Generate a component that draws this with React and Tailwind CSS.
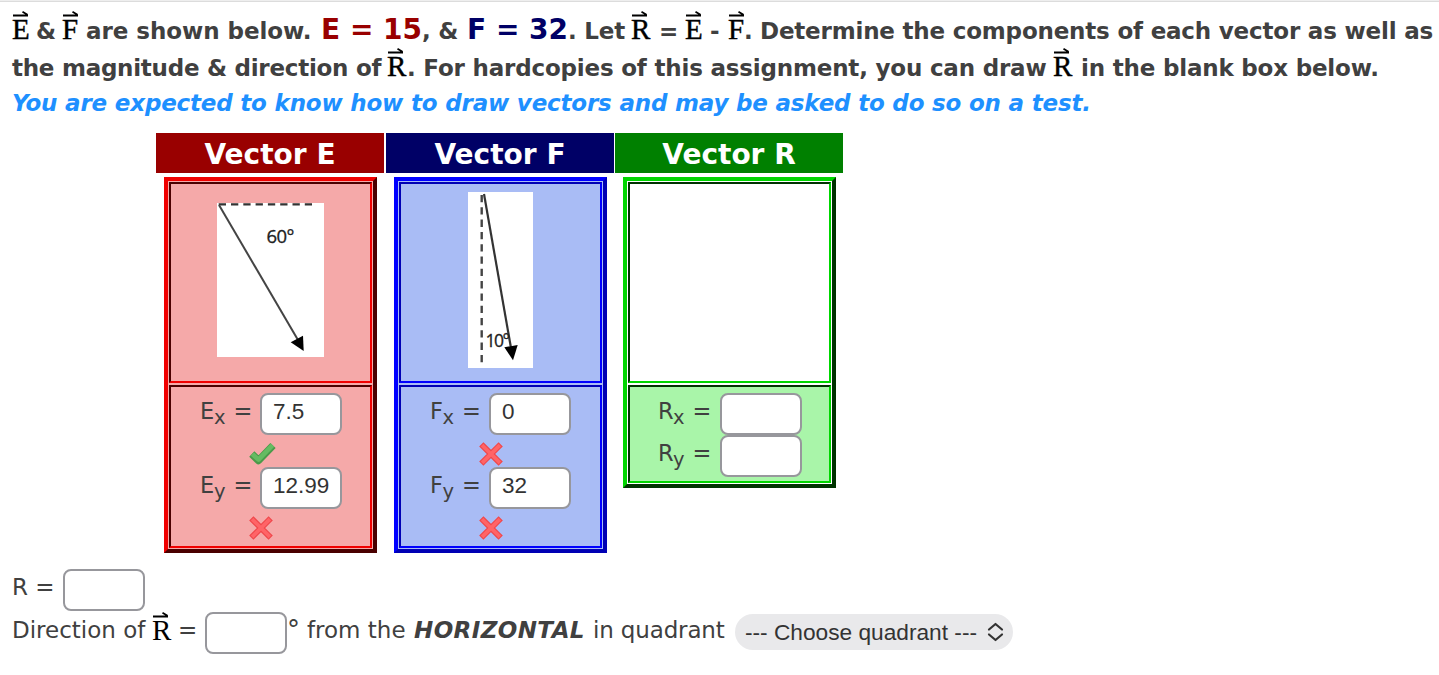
import React from "react";

const verdana = "font-[Verdana,'DejaVu_Sans',sans-serif]";
const arial = "font-['Liberation_Sans',Arial,sans-serif]";

// Letter with a harpoon arrow above it
function Vec({ letter, className = "" }) {
	return (
		<span className={`relative block shrink-0 font-['Liberation_Serif',serif] text-[29px] font-normal leading-9 tracking-normal text-black [-webkit-text-stroke:0.4px_#000] ${className}`}>
			{letter}
			<svg className="absolute left-0 top-0" width="20" height="6" viewBox="0 0 20 6" fill="none" stroke="#000" strokeWidth="1.8">
				<path d="M1 4.5H16M10.5 0.8L15.5 3.8" />
			</svg>
		</span>
	);
}

function Seg({ className = "", children }) {
	return <span className={`block shrink-0 whitespace-pre leading-9 ${className}`}>{children}</span>;
}

function Answer({ value = "", label }) {
	return (
		<input
			type="text"
			aria-label={label}
			defaultValue={value}
			className={`block h-[42px] w-[82px] shrink-0 rounded-lg border-2 border-[#97979c] bg-white pb-[5px] pl-[11px] text-[22.5px] text-[#333] outline-none ${arial}`}
		/>
	);
}

function Check() {
	return (
		<svg width="28" height="24" viewBox="0 0 28 24" fill="none" strokeLinejoin="round">
			<path d="M2.8 12L9.5 18.5L24 3.5" stroke="#4a9a4a" strokeWidth="7.4" />
			<path d="M3.3 12L9.5 17.6L23.6 3.2" stroke="#66bb62" strokeWidth="4.6" />
		</svg>
	);
}

function Cross() {
	return (
		<svg width="24" height="24" viewBox="0 0 24 24" fill="none" strokeLinecap="square">
			<path d="M4.4 4.4L19.6 19.6M19.6 4.4L4.4 19.6" stroke="#f0484c" strokeWidth="6" strokeLinejoin="round" />
			<path d="M4.4 4.4L19.6 19.6M19.6 4.4L4.4 19.6" stroke="#ff6467" strokeWidth="3.6" />
		</svg>
	);
}

function Row({ letter, sub, value, mark, letterWidth = "w-[14px]", labelWidth = "w-[60px]" }) {
	return (
		<>
			<div className="flex h-[42px]">
				<div className={`flex shrink-0 whitespace-nowrap text-[22.5px] leading-9 ${labelWidth}`}>
					<span className={letterWidth}>{letter}</span>
					<span className="w-[19.5px] pt-[7px] text-[19.5px]">{sub}</span>
					<span>=</span>
				</div>
				<Answer value={value} label={`${letter}${sub}`} />
			</div>
			{mark && (
				<div className="flex h-[32px] items-center pl-[49px] pt-[6px]">
					{mark === "right" ? <Check /> : <Cross />}
				</div>
			)}
		</>
	);
}

function Column({ title, head, outer, inner, top = "", bottom = "", children, drawing, pad, className = "" }) {
	return (
		<div className={`w-[228px] ${className}`}>
			<h2 className={`h-10 text-center text-[28px] font-bold leading-[43px] text-white ${head}`}>{title}</h2>
			<div className={`ml-2 mt-1 flex w-[213px] flex-col gap-[2px] border-4 p-px ${outer}`}>
				<div className={`flex h-[201px] justify-center border-2 ${inner} ${top}`}>{drawing}</div>
				<div className={`border-2 pt-[6px] ${inner} ${bottom} ${pad}`}>{children}</div>
			</div>
		</div>
	);
}

function DrawingE() {
	return (
		<svg className="mt-[19px]" width="107" height="154" viewBox="217 203 107 154">
			<rect x="217" y="203" width="107" height="154" fill="#fff" />
			<path d="M218.7 204.3H312" stroke="#333" strokeWidth="2.2" strokeDasharray="7.3 5" />
			<path d="M219 205L298 340" stroke="#444" strokeWidth="2" />
			<path d="M290.7 342.3L303 335.7L303.7 351Z" fill="#000" />
			<text x="266.5" y="242.8" fontFamily="Open Sans" fontSize="18.5" textLength="28" fill="#222" stroke="#222" strokeWidth="0.3">60°</text>
		</svg>
	);
}

function DrawingF() {
	return (
		<svg className="mr-[1px] mt-[8px]" width="65" height="176" viewBox="467 192 65 176">
			<rect x="467" y="192" width="65" height="176" fill="#fff" />
			<path d="M480.7 195V363" stroke="#444" strokeWidth="2.4" strokeDasharray="7.3 5" />
			<path d="M483 194L510 348" stroke="#333" strokeWidth="2.2" />
			<path d="M503.3 347.3L516.7 345L512 360.3Z" fill="#000" />
			<text x="484.5" y="346.8" fontFamily="Open Sans" fontSize="17.5" textLength="24.5" fill="#222" stroke="#222" strokeWidth="0.3">10°</text>
		</svg>
	);
}

function App() {
	return (
		<div className={`h-[675px] w-[1439px] overflow-hidden bg-white text-[23px] text-[#404040] ${verdana}`}>
			<div className="h-[2px] border-b border-[#dcdcdc] bg-[#eee]" />

			{/* Question text */}
			<div className="pl-3 pt-[9px] font-bold tracking-[-0.19px]">
				<div className="flex h-[37px] items-baseline">
					<Vec letter="E" className="w-[24px]" />
					<Seg className="w-[26px]">&amp;</Seg>
					<Vec letter="F" className="w-[24px]" />
					<Seg className="w-[235px] tracking-[-0.05px]">are shown below.</Seg>
					<Seg className="w-[101px] text-[28px] tracking-normal text-[#990000]">E = 15</Seg>
					<Seg className="w-[45px]">, &amp;</Seg>
					<Seg className="w-[101px] text-[28px] tracking-normal text-[#000066]">F = 32</Seg>
					<Seg className="w-[63px]">. Let</Seg>
					<Vec letter="R" className="w-[28px]" />
					<Seg className="w-[26px]">=</Seg>
					<Vec letter="E" className="w-[25px]" />
					<Seg className="w-[18px]">-</Seg>
					<Vec letter="F" className="w-[16px]" />
					<Seg className="w-[16px]">.</Seg>
					<Seg>Determine the components of each vector as well as</Seg>
				</div>
				<div className="flex h-[36px] items-baseline">
					<Seg className="w-[375px] tracking-[-0.26px]">the magnitude &amp; direction of</Seg>
					<Vec letter="R" className="w-[20px]" />
					<Seg className="w-[646px]">. For hardcopies of this assignment, you can draw</Seg>
					<Vec letter="R" className="w-[28px]" />
					<Seg>in the blank box below.</Seg>
				</div>
				<div className="flex h-[36px] pt-px italic text-[#1e90ff]">
					<Seg>You are expected to know how to draw vectors and may be asked to do so on a test.</Seg>
				</div>
			</div>

			{/* Vector table */}
			<div className="ml-[156px] mt-[13px] flex h-[422px] gap-[2px]">
				<Column
					title="Vector E"
					head="bg-[#990000]"
					outer="border-t-[#f00000] border-l-[#f00000] border-b-[#4a0000] border-r-[#4a0000] bg-[#f5a9a9]"
					inner="border-t-[#4a0000] border-l-[#4a0000] border-b-[#f00000] border-r-[#f00000]"
					pad="h-[163px] pl-[29px]"
					drawing={<DrawingE />}
				>
					<Row letter="E" sub="x" value="7.5" mark="right" />
					<Row letter="E" sub="y" value="12.99" mark="wrong" />
				</Column>
				<Column
					title="Vector F"
					head="bg-[#000066]"
					outer="border-t-[#0000ff] border-l-[#0000ff] border-b-[#0000b4] border-r-[#0000b4] bg-[#a9bcf5]"
					inner="border-t-[#0000b4] border-l-[#0000b4] border-b-[#0000ff] border-r-[#0000ff]"
					pad="h-[163px] pl-[29px]"
					drawing={<DrawingF />}
				>
					<Row letter="F" sub="x" value="0" mark="wrong" letterWidth="w-[12.5px]" labelWidth="w-[59px]" />
					<Row letter="F" sub="y" value="32" mark="wrong" letterWidth="w-[12.5px]" labelWidth="w-[59px]" />
				</Column>
				<Column
					title="Vector R"
					className="-ml-px"
					head="bg-[#008000]"
					outer="border-t-[#00d600] border-l-[#00d600] border-b-[#003300] border-r-[#003300] bg-white"
					inner="border-t-[#003300] border-l-[#003300] border-b-[#00d600] border-r-[#00d600]"
					bottom="bg-[#a9f5a9]"
					pad="h-[98px] pl-[28px]"
				>
					<Row letter="R" sub="x" letterWidth="w-[15px]" labelWidth="w-[62px]" />
					<Row letter="R" sub="y" letterWidth="w-[15px]" labelWidth="w-[62px]" />
				</Column>
			</div>

			{/* Resultant */}
			<div className="ml-3 mt-[14px] flex h-[43px]">
				<Seg className="w-[51px]">R =</Seg>
				<Answer label="R" />
			</div>
			<div className="ml-3 flex h-[43px] items-start">
				<Seg className="w-[140px]">Direction of</Seg>
				<Vec letter="R" className="w-[26px] text-[27.5px] [-webkit-text-stroke:0px]" />
				<Seg className="w-[27px]">=</Seg>
				<Answer label="Direction" />
				<Seg className="w-[20px] text-[26px]">°</Seg>
				<Seg className="w-[107px]">from the</Seg>
				<Seg className="w-[179px] font-bold italic tracking-[0.4px]">HORIZONTAL</Seg>
				<Seg className="w-[142px] tracking-[-0.15px]">in quadrant</Seg>
				<button className={`mt-[2px] flex h-[36px] w-[278px] shrink-0 items-center whitespace-nowrap rounded-full bg-[#e9e9eb] pl-[10px] text-[22.7px] text-[#333] ${arial}`}>
					<span className="w-[242px] text-left">--- Choose quadrant ---</span>
					<svg width="17" height="20" viewBox="0 0 17 20" fill="none" stroke="#333" strokeWidth="2.2" strokeLinecap="round" strokeLinejoin="round">
						<path d="M2 7.5L8.5 2L15 7.5M2 12.5L8.5 18L15 12.5" />
					</svg>
				</button>
			</div>
		</div>
	);
}

export default App;
